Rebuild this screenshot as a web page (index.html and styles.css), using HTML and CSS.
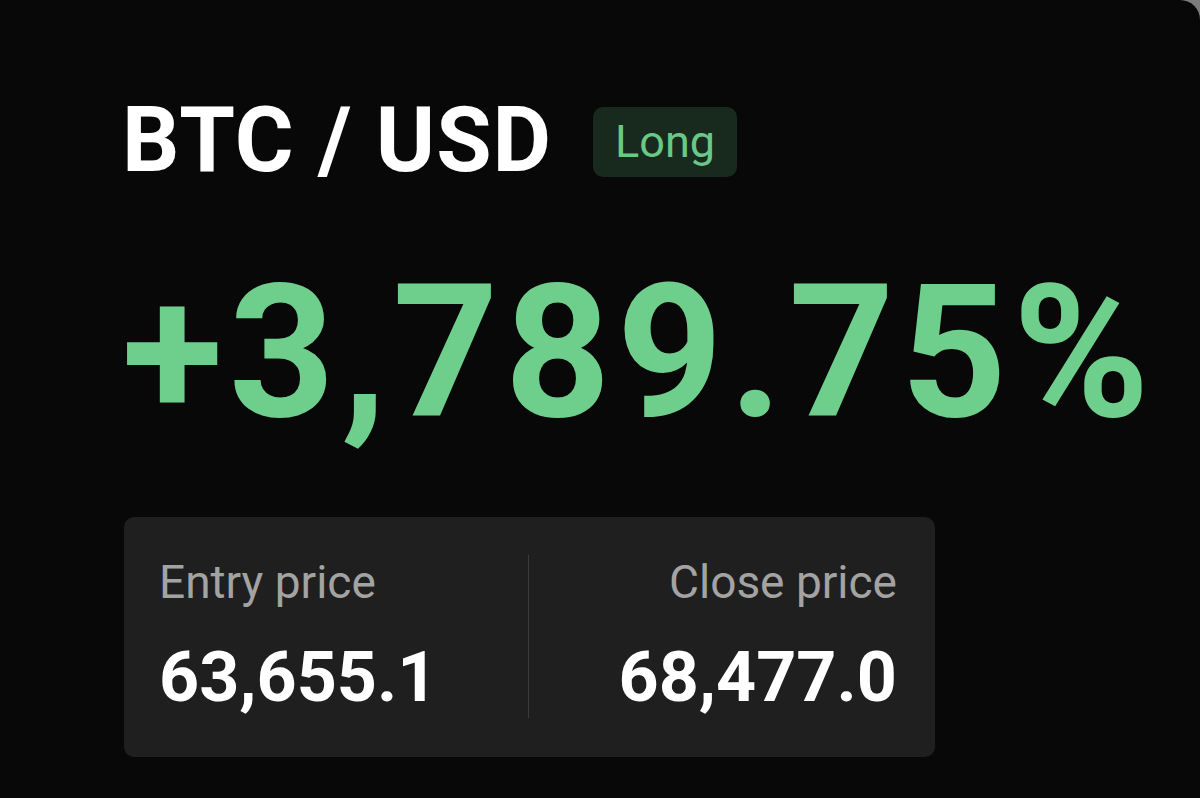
FILE: index.html
```html
<!DOCTYPE html>
<html lang="en">
<head>
<meta charset="utf-8">
<title>BTC / USD position</title>
<link rel="stylesheet" href="styles.css">
</head>
<body>
<div class="screen">
  <div class="content">
    <div class="header">
      <h1 class="pair">BTC / USD</h1>
      <span class="badge">Long</span>
    </div>
    <div class="pnl">+3,789.75%</div>
    <div class="prices">
      <div class="price-col">
        <div class="label">Entry price</div>
        <div class="value">63,655.1</div>
      </div>
      <div class="divider"></div>
      <div class="price-col right">
        <div class="label">Close price</div>
        <div class="value">68,477.0</div>
      </div>
    </div>
  </div>
</div>
</body>
</html>
```

FILE: styles.css
```css
html, body {
  margin: 0;
  padding: 0;
  width: 1200px;
  height: 798px;
  overflow: hidden;
  background: #7c7c7c;
}

.screen {
  width: 1200px;
  height: 798px;
  background: #080808;
  border-top-right-radius: 20px;
  font-family: Roboto, "Liberation Sans", sans-serif;
}

.content {
  display: flex;
  flex-direction: column;
  align-items: flex-start;
  padding: 88px 0 0 122px;
}

.header {
  display: flex;
  align-items: center;
  gap: 41px;
}

.pair {
  margin: 0;
  font-size: 90px;
  font-weight: 700;
  color: #ffffff;
  line-height: 106px;
  letter-spacing: 1px;
}

.badge {
  background: #182a1e;
  color: #6ac886;
  font-size: 45px;
  font-weight: 400;
  line-height: 70px;
  padding: 0 22px;
  border-radius: 10px;
  margin-top: 2px;
}

.pnl {
  margin-top: 52px;
  font-size: 185px;
  font-weight: 700;
  color: #6dcf8b;
  line-height: 214px;
  letter-spacing: 6px;
}

.prices {
  margin-top: 57px;
  margin-left: 2px;
  width: 811px;
  box-sizing: border-box;
  background: #1f1f1f;
  border-radius: 10px;
  padding: 38px 38px 39px 35px;
  display: grid;
  grid-template-columns: 1fr 1px 1fr;
}

.price-col {
  display: flex;
  flex-direction: column;
}

.price-col.right {
  align-items: flex-end;
}

.divider {
  background: #3a3a3a;
}

.label {
  font-size: 46px;
  color: #a3a3a3;
  line-height: 54px;
}

.value {
  margin-top: 27px;
  font-size: 70px;
  font-weight: 700;
  color: #ffffff;
  line-height: 82px;
}
```
